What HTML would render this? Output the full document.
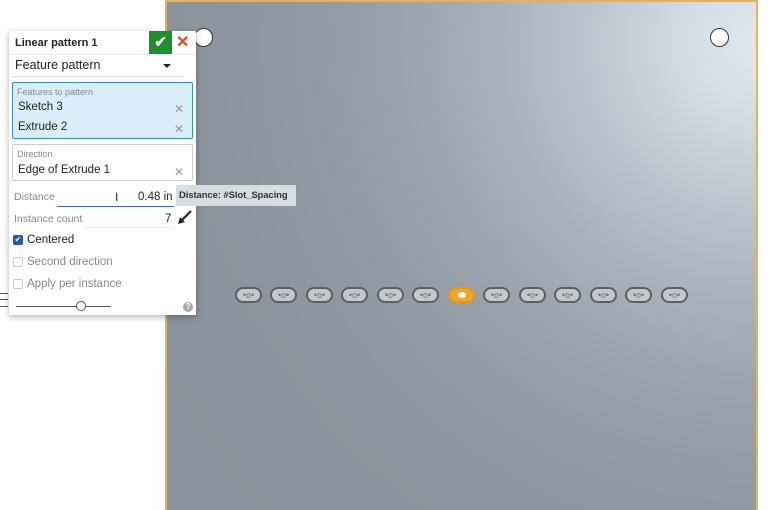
<!DOCTYPE html>
<html><head><meta charset="utf-8"><style>
*{box-sizing:border-box;margin:0;padding:0}
body{width:768px;height:510px;overflow:hidden;background:#fff;font-family:"Liberation Sans",sans-serif;position:relative}
#vp{position:absolute;left:165px;top:0;width:593px;height:510px;border-left:2px solid #e3b25f;border-top:2px solid #e3b25f;border-right:2px solid #e3b25f;
background:radial-gradient(circle at 100% 8%,#dfe7ee 0px,#d6dfe6 60px,#c7d0d7 120px,#b7c0c8 190px,#a9b2ba 260px,#9ca5ad 340px,#929ba3 430px,#8c959d 540px,#89929a 700px);}
.hole{position:absolute;width:19px;height:19px;border-radius:50%;background:#fff;border:1.5px solid #333}
.slot{position:absolute;top:287px;width:27px;height:16px;border-radius:8px;border:2px solid #5a6066;background:#c3c8cd}
.slot::after{content:"•o•";position:absolute;left:0;right:0;top:0px;text-align:center;font-size:9px;color:#6a7076;line-height:12px}
.slot.sel{background:#f2a623;border:2px solid #e39a1a}
.slot.sel::after{content:"";left:8px;top:3px;width:8px;height:6px;border-radius:50%;background:#fff;right:auto}
#panel{position:absolute;left:9px;top:31px;width:187px;height:284px;background:#fff;box-shadow:0 2px 6px rgba(0,0,0,.3)}
.t{position:absolute;font-size:11.5px;color:#222;white-space:nowrap}
.g{color:#888}
.box{position:absolute;left:3px;width:181px;border:1px solid #ccc;border-radius:2px}
.x{position:absolute;right:8px;color:#999;font-size:12px}
.cb{position:absolute;left:4px;width:10px;height:10px;border:1px solid #ccc;border-radius:2px;background:#fff}
</style></head><body>
<div id="vp">
<div class="hole" style="left:27px;top:26px"></div>
<div class="hole" style="left:543px;top:26px"></div>
</div>
<div style="position:absolute;left:0;top:293px;width:8px;height:14px;border-top:1px solid #555;border-bottom:1px solid #555"><div style="border-top:1px solid #555;margin-top:5px"></div></div>
<div class="slot" style="left:235px"></div><div class="slot" style="left:270px"></div><div class="slot" style="left:306px"></div><div class="slot" style="left:341px"></div><div class="slot" style="left:377px"></div><div class="slot" style="left:412px"></div><div class="slot sel" style="left:448px"></div><div class="slot" style="left:483px"></div><div class="slot" style="left:519px"></div><div class="slot" style="left:554px"></div><div class="slot" style="left:590px"></div><div class="slot" style="left:625px"></div><div class="slot" style="left:661px"></div>
<div id="panel">
<div class="t" style="left:6px;top:6px;font-weight:bold;font-size:11px">Linear pattern 1</div>
<div style="position:absolute;left:140px;top:0;width:23px;height:23px;background:#1d8f2c;color:#fff;text-align:center;font-size:15px;line-height:23px;font-weight:bold">✔</div>
<div style="position:absolute;left:167px;top:1px;color:#e0452a;font-size:16px;font-weight:bold">✕</div>
<div style="position:absolute;left:0;top:23px;width:187px;border-top:1px solid #eee"></div>
<div class="t" style="left:6px;top:27px;font-size:12.5px">Feature pattern</div>
<div style="position:absolute;left:154px;top:33px;border-left:4px solid transparent;border-right:4px solid transparent;border-top:4px solid #222"></div>
<div style="position:absolute;left:3px;top:45px;width:172px;border-top:1px solid #ddd"></div>
<div class="box" style="top:51px;height:57px;background:#d9eef8;border-color:#3b8ec9">
<div class="t g" style="left:4px;top:4px;font-size:9px">Features to pattern</div>
<div class="t" style="left:5px;top:18px">Sketch 3</div><div class="x" style="top:19px">✕</div>
<div class="t" style="left:5px;top:38px">Extrude 2</div><div class="x" style="top:39px">✕</div>
</div>
<div class="box" style="top:113px;height:37px">
<div class="t g" style="left:4px;top:4px;font-size:9px">Direction</div>
<div class="t" style="left:5px;top:19px">Edge of Extrude 1</div><div class="x" style="top:20px">✕</div>
</div>
<div class="t g" style="left:5px;top:160px;font-size:10.5px">Distance</div>
<div style="position:absolute;left:48px;top:175px;width:117px;border-top:1px solid #3a6fb0"></div>
<div class="t" style="left:106px;top:159px;font-size:12px">I</div>
<div class="t" style="left:129px;top:160px">0.48 in</div>
<div class="t g" style="left:5px;top:182px;font-size:10.5px">Instance count</div>
<div class="t" style="left:156px;top:182px">7</div>
<div style="position:absolute;left:75px;top:196px;width:90px;border-top:1px solid #eee"></div>
<svg style="position:absolute;left:168px;top:178px" width="16" height="16" viewBox="0 0 16 16"><path d="M14 2 L4 12" stroke="#222" stroke-width="2"/><path d="M1 15 L3 8 L8 13 Z" fill="#222"/></svg>
<div class="cb" style="top:204px;background:#2358b8;border-color:#2358b8;color:#fff;font-size:8px;line-height:8px;text-align:center">✔</div>
<div class="t" style="left:18px;top:203px">Centered</div>
<div class="cb" style="top:226px"></div><div class="t g" style="left:18px;top:225px">Second direction</div>
<div class="cb" style="top:248px"></div><div class="t g" style="left:18px;top:247px">Apply per instance</div>
<div style="position:absolute;left:7px;top:275px;width:95px;border-top:1px solid #555"></div>
<div style="position:absolute;left:67px;top:270px;width:10px;height:10px;border-radius:50%;background:#fff;border:1px solid #555"></div>
<div style="position:absolute;left:174px;top:271px;width:10px;height:10px;border-radius:50%;background:#aaa;color:#fff;font-size:8px;text-align:center;line-height:10px;font-weight:bold">?</div>
</div>
<div style="position:absolute;left:176px;top:185px;width:120px;height:21px;background:#d6dde3;font-size:9.5px;font-weight:bold;color:#333;line-height:21px;padding-left:3px;white-space:nowrap;overflow:hidden;letter-spacing:-0.1px">Distance: #Slot_Spacing</div>
</body></html>
